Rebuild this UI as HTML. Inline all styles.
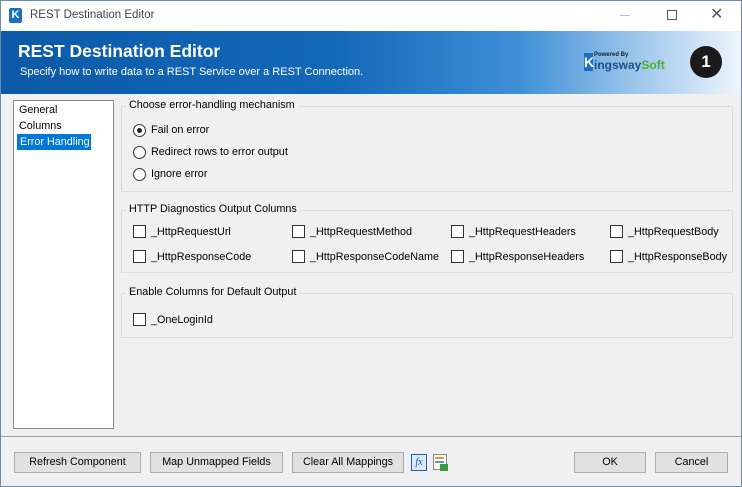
<!DOCTYPE html><html><head><style>
*{margin:0;padding:0;box-sizing:border-box}
body{width:742px;height:487px;overflow:hidden;background:#f0f0f0;font-family:"Liberation Sans",sans-serif;font-size:10.8px;color:#000;position:relative}
.a{position:absolute;white-space:nowrap}
.win{position:absolute;left:0;top:0;width:742px;height:487px;border:1px solid #6d8aa6}
.title{left:1px;top:1px;width:740px;height:30px;background:#fff}
.hdr{left:1px;top:31px;width:740px;height:63px;background:linear-gradient(90deg,#0b5aa8 0%,#1468b8 45%,#3e8fd6 70%,#a9cdee 88%,#eef5fc 100%)}
.gb{position:absolute;border:1px solid #dcdcdc}
.gl{position:absolute;background:#f0f0f0;padding:0 3px;top:-8px;left:4px}
.rb{position:absolute;width:13px;height:13px;border:1px solid #333;border-radius:50%;background:#fff}
.cb{position:absolute;width:13px;height:13px;border:1px solid #333;background:#fff}
.btn{position:absolute;top:452px;height:21px;border:1px solid #adadad;background:#e1e1e1;text-align:center;line-height:19px}
</style></head><body>
<div class="win"></div>
<div class="a title"></div>
<div class="a" style="left:9px;top:8px;width:13px;height:15px;background:#1d6fc0;border-radius:2px;color:#fff;font-weight:bold;font-size:11px;text-align:center;line-height:15px">K</div>
<div class="a" style="left:30px;top:9px;color:#444;font-size:11.5px">REST Destination Editor</div>
<div class="a" style="left:620px;top:15px;width:10px;height:1px;background:#bbb"></div>
<div class="a" style="left:667px;top:10px;width:10px;height:10px;border:1px solid #555"></div>
<div class="a" style="left:710px;top:4px;font-size:16px;color:#555">✕</div>
<div class="a hdr"></div>
<div class="a" style="left:18px;top:41px;color:#fff;font-weight:bold;font-size:17.5px">REST Destination Editor</div>
<div class="a" style="left:20px;top:66px;color:#fff;font-size:11px">Specify how to write data to a REST Service over a REST Connection.</div>
<div class="a" style="left:584px;top:53px;width:9px;height:18px;background:#1d6fc0;color:#fff;font-weight:bold;font-size:14px;line-height:18px;text-align:center">K</div>
<div class="a" style="left:594px;top:52px;font-size:6px;font-weight:bold;color:#123">Powered By</div>
<div class="a" style="left:594px;top:58px;font-size:12px;font-weight:bold;color:#1d4f8a">ingsway<span style="color:#4caf28">Soft</span></div>
<div class="a" style="left:690px;top:46px;width:32px;height:32px;border-radius:50%;background:#1a1a1a;color:#fff;font-weight:bold;font-size:17px;text-align:center;line-height:32px">1</div>
<div class="a" style="left:13px;top:100px;width:101px;height:329px;background:#fff;border:1px solid #828790"></div>
<div class="a" style="left:19px;top:104px">General</div>
<div class="a" style="left:19px;top:120px">Columns</div>
<div class="a" style="left:17px;top:134px;width:74px;height:16px;background:#0078d7;color:#fff;padding:2px 0 0 3px">Error Handling</div>
<div class="gb" style="left:121px;top:106px;width:612px;height:86px"><span class="gl">Choose error-handling mechanism</span></div>
<div class="rb" style="left:133px;top:124px"></div><div class="a" style="left:137px;top:128px;width:5px;height:5px;border-radius:50%;background:#222"></div>
<div class="a" style="left:151px;top:124px">Fail on error</div>
<div class="rb" style="left:133px;top:146px"></div><div class="a" style="left:151px;top:146px">Redirect rows to error output</div>
<div class="rb" style="left:133px;top:168px"></div><div class="a" style="left:151px;top:168px">Ignore error</div>
<div class="gb" style="left:121px;top:210px;width:612px;height:63px"><span class="gl">HTTP Diagnostics Output Columns</span></div>
<div class="cb" style="left:133px;top:225px"></div><div class="a" style="left:151px;top:226px">_HttpRequestUrl</div>
<div class="cb" style="left:292px;top:225px"></div><div class="a" style="left:310px;top:226px">_HttpRequestMethod</div>
<div class="cb" style="left:451px;top:225px"></div><div class="a" style="left:469px;top:226px">_HttpRequestHeaders</div>
<div class="cb" style="left:610px;top:225px"></div><div class="a" style="left:628px;top:226px">_HttpRequestBody</div>
<div class="cb" style="left:133px;top:250px"></div><div class="a" style="left:151px;top:251px">_HttpResponseCode</div>
<div class="cb" style="left:292px;top:250px"></div><div class="a" style="left:310px;top:251px">_HttpResponseCodeName</div>
<div class="cb" style="left:451px;top:250px"></div><div class="a" style="left:469px;top:251px">_HttpResponseHeaders</div>
<div class="cb" style="left:610px;top:250px"></div><div class="a" style="left:628px;top:251px">_HttpResponseBody</div>
<div class="gb" style="left:121px;top:293px;width:612px;height:45px"><span class="gl">Enable Columns for Default Output</span></div>
<div class="cb" style="left:133px;top:313px"></div><div class="a" style="left:151px;top:314px">_OneLoginId</div>
<div class="a" style="left:1px;top:436px;width:740px;height:1px;background:#a0a0a0"></div>
<div class="btn" style="left:14px;width:127px">Refresh Component</div>
<div class="btn" style="left:150px;width:133px">Map Unmapped Fields</div>
<div class="btn" style="left:292px;width:112px">Clear All Mappings</div>
<div class="a" style="left:411px;top:454px;width:16px;height:17px;border:1px solid #1d5fb0;background:#dbe9fb;color:#1d4f9a;font-style:italic;font-size:10px;text-align:center;line-height:15px;font-family:'Liberation Serif',serif">fx</div>
<div class="a" style="left:433px;top:454px;width:14px;height:16px;border:1px solid #888;background:#fff"></div>
<div class="a" style="left:435px;top:457px;width:9px;height:2px;background:#e0a030"></div>
<div class="a" style="left:435px;top:461px;width:9px;height:2px;background:#6a8fc0"></div>
<div class="a" style="left:440px;top:464px;width:8px;height:7px;background:#3a9a3a"></div>
<div class="btn" style="left:574px;width:72px">OK</div>
<div class="btn" style="left:655px;width:73px">Cancel</div>
</body></html>
